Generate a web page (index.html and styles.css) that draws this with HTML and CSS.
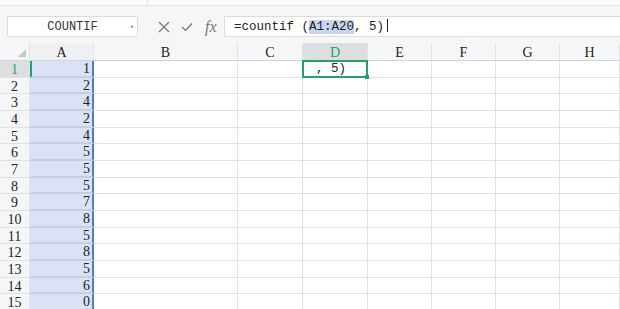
FILE: index.html
```html
<!DOCTYPE html>
<html lang="zh">
<head>
  <meta charset="UTF-8">
  <title>COUNTIF</title>
  <link rel="stylesheet" href="styles.css">
</head>
<body>
  <div class="topstrip"><span class="tick"></span></div>

  <div class="fbar">
    <div class="namebox">COUNTIF<span class="caret">&#9662;</span></div>
    <div class="fbtns">
      <svg width="12" height="12" viewBox="0 0 12 12"><path d="M1 1L11 11M11 1L1 11" stroke="#777" stroke-width="1.2" fill="none"/></svg>
      <svg width="12" height="10" viewBox="0 0 12 10"><path d="M1 5L4.5 8.5L11 1.5" stroke="#777" stroke-width="1.2" fill="none"/></svg>
      <span class="fx">fx</span>
    </div>
    <div class="finput">=countif (<span class="ref">A1:A20</span>, 5)<span class="cursor"></span></div>
  </div>

  <div class="sheet" id="sheet">
    <div class="hd corner"><span class="tri"></span></div>
    <div class="hd sel">A</div>
    <div class="hd">B</div>
    <div class="hd">C</div>
    <div class="hd act">D</div>
    <div class="hd">E</div>
    <div class="hd">F</div>
    <div class="hd">G</div>
    <div class="hd">H</div>
  </div>

  <script>
    const valores = [1, 2, 4, 2, 4, 5, 5, 5, 7, 8, 5, 8, 5, 6, 0];
    const sheet = document.getElementById("sheet");

    valores.forEach((v, i) => {
      const primera = i === 0;
      let fila = `<div class="rh${primera ? " act" : ""}">${i + 1}</div>`;
      fila += `<div class="c a${primera ? " first" : ""}">${v}</div>`;
      fila += `<div class="c"></div><div class="c"></div>`;
      fila += primera ? `<div class="c d1">, 5)<span class="fill"></span></div>` : `<div class="c"></div>`;
      fila += `<div class="c"></div><div class="c"></div><div class="c"></div><div class="c"></div>`;
      sheet.innerHTML += fila;
    });
  </script>
</body>
</html>
```

FILE: styles.css
```css
:root {
  --grid: #dfe2e8;
  --sel-bg: #dbe2f4;
  --sel-line: #c6cee3;
  --sel-edge: #4d7bd8;
  --green: #1fa463;
  --head-bg: #f5f6f7;
  --head-act: #dcdee2;
}

body {
  margin: 0;
  background: #fff;
  font-family: "Liberation Serif", serif;
  color: #222;
  overflow: hidden;
}

.topstrip {
  height: 5px;
  background: #fbfbfb;
  border-bottom: 1px solid #e6e6e6;
  position: relative;
}

.tick {
  position: absolute;
  left: 147px;
  top: 0;
  height: 5px;
  border-left: 1px solid #e4e4e4;
}

.fbar {
  height: 37px;
  background: #f6f6f6;
  display: flex;
  align-items: flex-start;
  padding-top: 10px;
  box-sizing: border-box;
}

.namebox {
  margin-left: 7px;
  width: 131px;
  height: 21px;
  box-sizing: border-box;
  background: #fff;
  border: 1px solid #dcdcdc;
  border-radius: 2px;
  font-family: "Liberation Mono", monospace;
  font-size: 12px;
  line-height: 20px;
  text-align: center;
  color: #333;
  position: relative;
}

.caret {
  position: absolute;
  right: 3px;
  top: 0;
  font-size: 7px;
  color: #888;
}

.fbtns {
  width: 86px;
  height: 21px;
  display: flex;
  align-items: center;
  padding-left: 20px;
  gap: 11px;
  box-sizing: border-box;
}

.fx {
  font-family: "Liberation Serif", serif;
  font-style: italic;
  font-size: 16px;
  color: #777;
  margin-left: 1px;
}

.finput {
  flex: 1;
  height: 21px;
  box-sizing: border-box;
  background: #fff;
  border: 1px solid #dcdcdc;
  border-right: none;
  border-radius: 2px 0 0 2px;
  padding-left: 9px;
  font-family: "Liberation Mono", monospace;
  font-size: 12.5px;
  line-height: 20px;
  color: #222;
}

.ref {
  background: #c9d5ee;
}

.cursor {
  display: inline-block;
  width: 1px;
  height: 13px;
  background: #222;
  margin-left: 3px;
  vertical-align: -2px;
}

.sheet {
  display: grid;
  grid-template-columns: 30px 64px 144px 65px 65px 64px 64px 64px 1fr;
  grid-template-rows: 18px;
  grid-auto-rows: 16.667px;
}

.hd, .rh, .c {
  box-sizing: border-box;
  border-right: 1px solid var(--grid);
  border-bottom: 1px solid var(--grid);
  font-size: 14px;
  overflow: hidden;
  white-space: nowrap;
}

.hd {
  background: var(--head-bg);
  text-align: center;
  line-height: 19px;
  border-right-color: #e2e4e8;
  border-bottom-color: #cfd3da;
}

.hd.sel {
  background: #eef0f4;
}

.hd.act {
  background: var(--head-act);
  color: var(--green);
}

.corner {
  position: relative;
}

.tri {
  position: absolute;
  right: 3px;
  bottom: 3px;
  border-left: 8px solid transparent;
  border-bottom: 8px solid #c9c9c9;
}

.rh {
  background: var(--head-bg);
  text-align: center;
  line-height: 17px;
}

.rh.act {
  background: var(--head-act);
  color: var(--green);
}

.c.a {
  background: var(--sel-bg);
  border-bottom: 2px solid var(--sel-line);
  border-right: 2px solid var(--sel-edge);
  text-align: right;
  padding-right: 2px;
  line-height: 16px;
}

.c.a.first {
  border-left: 2px solid var(--green);
}

.d1 {
  border: 2px solid var(--green);
  margin: -1px 0 0 -1px;
  font-family: "Liberation Mono", monospace;
  font-size: 12.5px;
  line-height: 15px;
  padding-left: 12px;
  position: relative;
  overflow: visible;
}

.fill {
  position: absolute;
  right: -3px;
  bottom: -3px;
  width: 4px;
  height: 4px;
  background: var(--green);
}
```
